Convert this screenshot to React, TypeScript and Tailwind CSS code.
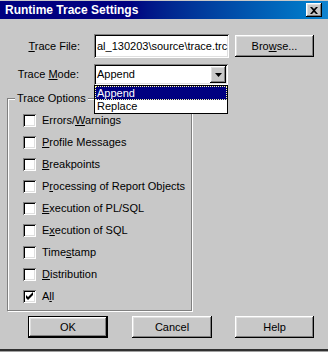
import React from 'react';

const raised =
  'shadow-[inset_-1px_-1px_0_#000,inset_1px_1px_0_#fff,inset_-2px_-2px_0_#808080,inset_2px_2px_0_#dfdfdf]';
const sunken =
  'shadow-[inset_1px_1px_0_#808080,inset_-1px_-1px_0_#fff,inset_2px_2px_0_#000,inset_-2px_-2px_0_#dfdfdf]';

const K = ({ c }: { c: string }) => <span className="underline underline-offset-[1px]">{c}</span>;

type Opt = { pre: string; key: string; post: string; checked?: boolean };

const options: Opt[] = [
  { pre: 'Errors/', key: 'W', post: 'arnings' },
  { pre: '', key: 'P', post: 'rofile Messages' },
  { pre: '', key: 'B', post: 'reakpoints' },
  { pre: 'P', key: 'r', post: 'ocessing of Report Objects' },
  { pre: '', key: 'E', post: 'xecution of PL/SQL' },
  { pre: 'E', key: 'x', post: 'ecution of SQL' },
  { pre: 'Time', key: 's', post: 'tamp' },
  { pre: '', key: 'D', post: 'istribution' },
  { pre: 'A', key: 'l', post: 'l', checked: true },
];

const Checkbox = ({ checked }: { checked?: boolean }) => (
  <div className={`w-[13px] h-[13px] bg-white shrink-0 flex items-center justify-center ${sunken}`}>
    {checked && (
      <svg width="13" height="13" viewBox="0 0 13 13">
        <path d="M3 5 L5 7 L10 2 L10 5 L5 10 L3 8 Z" fill="#000" />
      </svg>
    )}
  </div>
);

export default function App() {
  return (
    <div className="w-[328px] h-[352px] bg-[#c8c8c8] overflow-hidden font-['Liberation_Sans',Arial,sans-serif] text-[11px] leading-[13px] text-black shadow-[inset_0_-1px_0_#a0a0a0,inset_0_-3px_0_#303030]">
      {/* title bar */}
      <div className="mt-[1px] h-[18px] flex items-center bg-linear-to-r from-[#000080] from-40% to-[#1084d0] pl-[5px] pr-[6px]">
        <span className="text-white font-bold text-[12px]">Runtime Trace Settings</span>
        <div className={`ml-auto w-[16px] h-[14px] bg-[#c8c8c8] flex items-center justify-center ${raised}`}>
          <svg width="8" height="7" viewBox="0 0 8 7">
            <path d="M0 0 L2 0 L4 2 L6 0 L8 0 L5 3.5 L8 7 L6 7 L4 5 L2 7 L0 7 L3 3.5 Z" fill="#000" />
          </svg>
        </div>
      </div>

      {/* trace file */}
      <div className="mt-[15px] flex items-center h-[24px]">
        <div className="w-[94px] pr-[14px] text-right">
          <K c="T" />race File:
        </div>
        <div className={`w-[135px] h-[24px] bg-white pl-[3px] flex items-center overflow-hidden whitespace-nowrap ${sunken}`}>
          al_130203\source\trace.trc
        </div>
        <div className={`ml-[6px] w-[79px] h-[22px] flex items-center justify-center ${raised}`}>
          Bro<K c="w" />se...
        </div>
      </div>

      {/* trace mode */}
      <div className="mt-[6px] flex items-center h-[21px]">
        <div className="w-[94px] pr-[15px] text-right">
          Trace <K c="M" />ode:
        </div>
        <div className={`relative w-[134px] h-[21px] bg-white pl-[3px] flex items-center ${sunken}`}>
          Append
          <div className={`absolute right-[2px] top-[2px] w-[16px] h-[17px] bg-[#c8c8c8] flex items-center justify-center ${raised}`}>
            <svg width="7" height="4" viewBox="0 0 7 4">
              <path d="M0 0 L7 0 L3.5 4 Z" fill="#000" />
            </svg>
          </div>
          <div className="absolute z-10 left-0 top-[21px] w-[134px] border border-black bg-white">
            <div className="h-[14px] bg-[#000080] text-white pl-[2px] flex items-center outline-1 outline-dotted outline-[#ffffa0] -outline-offset-1">
              Append
            </div>
            <div className="h-[13px] pl-[2px] flex items-center">Replace</div>
          </div>
        </div>
      </div>

      {/* trace options group */}
      <fieldset className="mt-[7px] ml-[7px] w-[185px] border border-[#808080] shadow-[inset_1px_1px_0_#fff,1px_1px_0_#fff] pt-[4px] pb-[3px]">
        <legend className="ml-[7px] px-[2px] leading-[13px] bg-[#c8c8c8]">Trace Options</legend>
        <div className="pl-[15px]">
          {options.map((o) => (
            <div key={o.pre + o.key + o.post} className="h-[22px] flex items-center">
              <Checkbox checked={o.checked} />
              <span className="ml-[6px] whitespace-nowrap">
                {o.pre}
                <K c={o.key} />
                {o.post}
              </span>
            </div>
          ))}
        </div>
      </fieldset>

      {/* buttons */}
      <div className="mt-[5px] flex h-[22px]">
        <div className="ml-[28px] w-[80px] h-[22px] border border-black">
          <div className={`w-full h-full flex items-center justify-center ${raised}`}>OK</div>
        </div>
        <div className={`ml-[24px] w-[80px] h-[22px] flex items-center justify-center ${raised}`}>Cancel</div>
        <div className={`ml-[23px] w-[79px] h-[22px] flex items-center justify-center ${raised}`}>Help</div>
      </div>
    </div>
  );
}
